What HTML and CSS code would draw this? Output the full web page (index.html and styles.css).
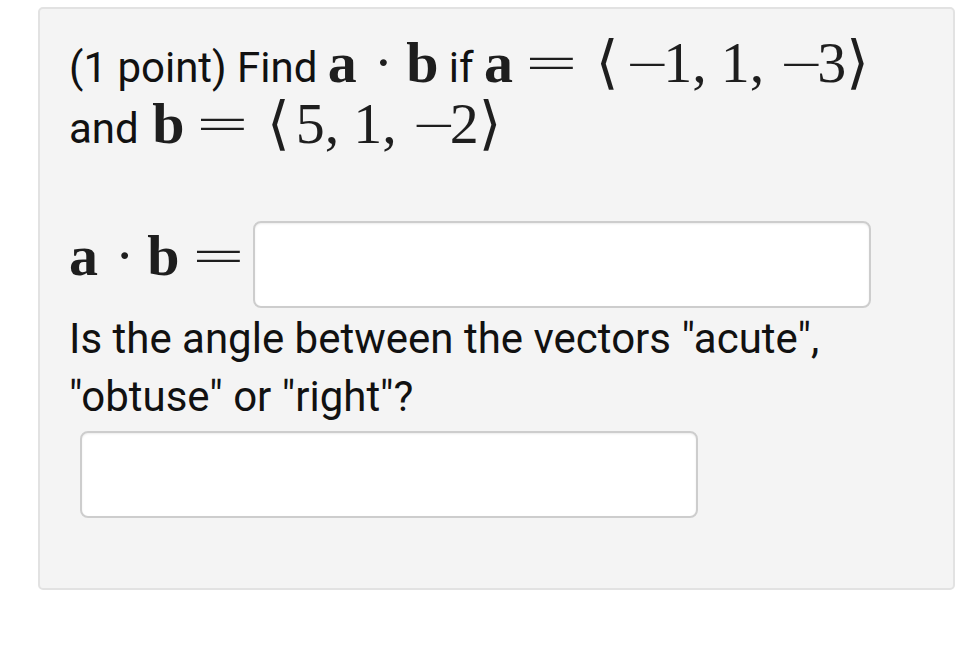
FILE: index.html
```html
<!DOCTYPE html>
<html>
<head>
<meta charset="utf-8">
<link rel="stylesheet" href="styles.css">
</head>
<body>
<div class="card">
  <p class="prompt">(1 point) Find <span class="m"><b>a</b><span class="op">·</span><b>b</b></span> if <span class="m"><b>a</b><span class="rel">=</span><span class="br">⟨</span><span class="mn">−</span>1<span class="cm">,</span>1<span class="cm">,</span><span class="mn">−</span>3<span class="br br-r">⟩</span></span> and <span class="m"><b class="b2">b</b><span class="rel">=</span><span class="br">⟨</span>5<span class="cm">,</span>1<span class="cm">,</span><span class="mn">−</span>2<span class="br br-r">⟩</span></span></p>
  <div class="answer-row">
    <span class="m"><b>a</b><span class="op">·</span><b>b</b><span class="rel">=</span></span>
    <input class="field" type="text">
  </div>
  <p class="question">Is the angle between the vectors "acute", "obtuse" or "right"?</p>
  <input class="field field-indent" type="text">
</div>
</body>
</html>
```
FILE: styles.css
```css
html, body {
  margin: 0;
  padding: 0;
  background: #ffffff;
}
body {
  font-family: Roboto, "Liberation Sans", sans-serif;
  color: #111;
}
.card {
  margin: 7px 0 0 38px;
  width: 917px;
  height: 583px;
  box-sizing: border-box;
  background: #f4f4f4;
  border: 2px solid #e2e2e2;
  border-radius: 5px;
  padding: 28px 30px 0 29px;
}
.prompt {
  margin: 0;
  font-size: 42px;
  line-height: 61px;
}
.m {
  font-family: "Liberation Serif", serif;
  font-size: 58px;
  line-height: 1;
  color: #1e1e1e;
}
.prompt .m,
.prompt .m span {
  line-height: 0;
}
.m b {
  font-weight: bold;
}
.b2 {
  margin-left: 3px;
}
.op {
  margin: 0 13px 0 17px;
}
.rel {
  display: inline-block;
  transform: scaleX(1.18);
  font-family: "DejaVu Sans", sans-serif;
  font-weight: 200;
  margin: 0 20px 0 14px;
}
.mn {
  display: inline-block;
  width: 42px;
  margin-right: -3px;
  text-align: center;
  font-size: 0.95em;
  font-family: "DejaVu Sans", sans-serif;
  font-weight: 200;
}
.cm {
  margin-right: 14px;
}
.br {
  font-family: "DejaVu Sans", "DejaVu Serif", serif;
  font-weight: 200;
  margin-right: 6px;
}
.br-r {
  margin: 0;
}
.answer-row {
  display: flex;
  align-items: center;
  margin-top: 62px;
}
.answer-row .m {
  margin-bottom: 18px;
}
.answer-row .rel {
  margin-right: 9px;
}
.field {
  width: 618px;
  height: 87px;
  box-sizing: border-box;
  background: #fff;
  border: 2px solid #cdcdcd;
  border-radius: 8px;
  box-shadow: inset 0 1px 2px rgba(0, 0, 0, 0.08);
  margin: 0;
  padding: 0;
}
.answer-row .field {
  margin-left: 2px;
}
.question {
  margin: 2px 0 0 0;
  font-size: 42px;
  line-height: 58px;
}
.field-indent {
  display: block;
  margin: 5px 0 0 11px;
}
```
